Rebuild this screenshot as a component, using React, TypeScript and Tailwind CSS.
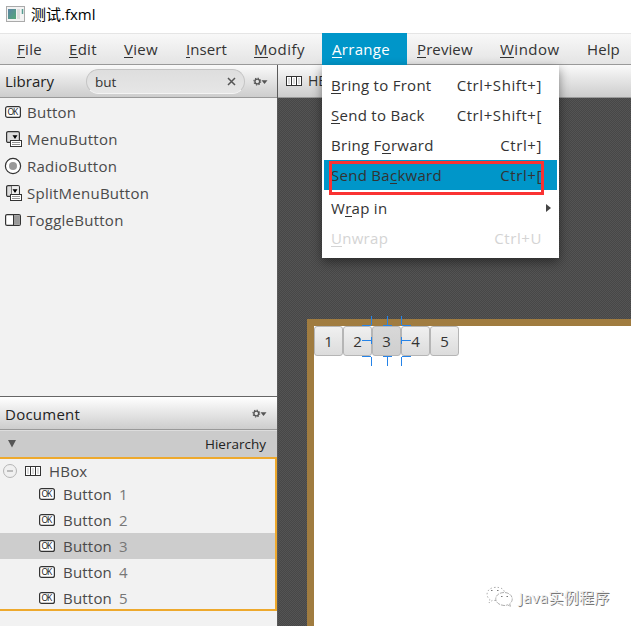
import clsx from "clsx";

const menus = [
  { before: "", key: "F", after: "ile", width: "w-[52px]", spacing: "tracking-[.3px]" },
  { before: "", key: "E", after: "dit", width: "w-[55px]", spacing: "tracking-[.3px]" },
  { before: "", key: "V", after: "iew", width: "w-[62px]", spacing: "tracking-[.3px]" },
  { before: "", key: "I", after: "nsert", width: "w-[68px]", spacing: "tracking-[.1px]" },
  { before: "", key: "M", after: "odify", width: "w-[78px]", spacing: "tracking-[.5px]" },
  { before: "", key: "A", after: "rrange", width: "w-[85px]", spacing: "tracking-[.3px]", active: true },
  { before: "", key: "P", after: "review", width: "w-[83px]", spacing: "tracking-[.1px]" },
  { before: "", key: "W", after: "indow", width: "w-[88px]", spacing: "tracking-[.5px]" },
  { before: "Help", key: "", after: "", width: "w-[53px]", spacing: "tracking-[.1px]" },
];

const arrangeItems = [
  { before: "", key: "B", after: "ring to Front", shortcut: "Ctrl+Shift+]" },
  { before: "", key: "S", after: "end to Back", shortcut: "Ctrl+Shift+[" },
  { before: "Bring F", key: "o", after: "rward", shortcut: "Ctrl+]" },
  { before: "Send Ba", key: "c", after: "kward", shortcut: "Ctrl+[", selected: true },
  { before: "W", key: "r", after: "ap in", submenu: true },
  { before: "", key: "U", after: "nwrap", shortcut: "Ctrl+U", disabled: true },
];

function Mnemonic({ before, char, after }: { before: string; char: string; after: string }) {
  return (
    <span className="whitespace-pre">
      {before}
      <span className="relative">
        {char}
        {char && <span className="absolute inset-x-0 bottom-[1px] h-px bg-current" />}
      </span>
      {after}
    </span>
  );
}

function OkIcon() {
  return (
    <svg width="16" height="12" viewBox="0 0 16 12" className="shrink-0">
      <rect x=".6" y=".6" width="14.8" height="10.8" rx="2" fill="#fff" stroke="#333" strokeWidth="1.2" />
      <text x="8" y="9" textAnchor="middle" fontSize="8.500" textLength="11" fontFamily="Open Sans, sans-serif" fill="#111">OK</text>
    </svg>
  );
}

function MenuButtonIcon({ split = false }: { split?: boolean }) {
  return (
    <svg width="18" height="18" viewBox="0 0 18 18" className="shrink-0">
      <rect x="1.6" y="1.6" width="12.8" height="10.8" rx="1.5" fill="#ddd" stroke="#333" strokeWidth="1.2" />
      {split && <path d="M6.5 2v10" stroke="#777" />}
      {split && <rect x="7" y="2.2" width="6.8" height="8" fill="#eee" />}
      <path d="M7.5 5.2h5L10 9z" fill="#000" />
      <rect x="5.5" y="10.5" width="11" height="6" fill="#fff" stroke="#333" />
      <path d="M7 12.5h8M7 14.5h8" stroke="#777" strokeWidth=".8" />
    </svg>
  );
}

function RadioIcon() {
  return (
    <svg width="18" height="18" viewBox="0 0 18 18" className="shrink-0">
      <circle cx="9" cy="9" r="7.6" fill="#fff" stroke="#333" strokeWidth="1.2" />
      <circle cx="9" cy="9" r="4" fill="#999" />
    </svg>
  );
}

function ToggleIcon() {
  return (
    <svg width="16" height="12" viewBox="0 0 16 12" className="shrink-0">
      <rect x=".6" y=".6" width="14.8" height="10.8" rx="1.5" fill="#fff" stroke="#333" strokeWidth="1.2" />
      <path d="M8.5 1.2h5.6q.8 0 .8.8v8q0 .8-.8.8H8.5z" fill="#999" />
      <path d="M8.5 1v10" stroke="#333" />
    </svg>
  );
}

function HBoxIcon() {
  return (
    <svg width="16" height="10" viewBox="0 0 16 10" className="shrink-0">
      <rect x=".5" y=".5" width="15" height="9" fill="#fff" stroke="#333" />
      <path d="M5.5 0v10M10.5 0v10" stroke="#333" />
      <path d="M2 2h2v6H2zM7 2h2v6H7zM12 2h2v6h-2z" fill="#ddd" />
    </svg>
  );
}

function GearMenu() {
  return (
    <svg width="15" height="9" viewBox="0 0 15 9" className="shrink-0">
      <circle cx="4.3" cy="4.5" r="2.4" fill="none" stroke="#555" strokeWidth="1.4" />
      <circle cx="4.3" cy="4.5" r="3.4" fill="none" stroke="#555" strokeWidth="1.1" strokeDasharray="1.2 1.47" />
      <path d="M8.5 3.2h6L11.5 7z" fill="#555" />
    </svg>
  );
}

function WeChatIcon() {
  return (
    <svg width="28" height="22" viewBox="0 0 28 22" fill="none" stroke="#999" strokeWidth=".8" className="shrink-0">
      <path d="M10 14.5q-2.500-.2-4 0L3 17l.8-3.500C-1 10 .5 2.500 8 1.500s10.500 2.500 10.500 5" strokeDasharray="1.5 2" />
      <path d="M18 6.500c-11 .5-11 12 0 13 1.500 0 2.500-.2 3.500-.7l3 1.700-.8-2.700C29 13.500 25.500 6.500 18 6.500z" strokeDasharray="4 1" />
      <path d="M5 4.500h1.500M11 4.500h1.500M15 10.500h1.500M20.500 10.500H22" stroke="#777" strokeWidth="1.2" />
    </svg>
  );
}

const library = [
  { name: "Button", icon: <OkIcon />, pad: "pl-[5px] gap-[6px]" },
  { name: "MenuButton", icon: <MenuButtonIcon />, pad: "pl-[5px] gap-[4px]" },
  { name: "RadioButton", icon: <RadioIcon />, pad: "pl-[4px] gap-[5px]" },
  { name: "SplitMenuButton", icon: <MenuButtonIcon split />, pad: "pl-[5px] gap-[4px]" },
  { name: "ToggleButton", icon: <ToggleIcon />, pad: "pl-[5px] gap-[6px]" },
];

function ArrangeMenu() {
  return (
    <div className="absolute left-[322px] top-[65px] z-10 w-[237px] bg-white py-[5px] text-[15px] tracking-[.28px] text-[#333] shadow-[0_4px_10px_rgba(0,0,0,0.45)]">
      {arrangeItems.map((item) => (
        <div key={item.after} className={clsx(item.submenu && "border-t-[3px] border-transparent")}>
          <div
            className={clsx(
              "mx-[2px] flex h-[30px] items-center justify-between pl-[7px] pr-[15px]",
              item.selected && "bg-[#0096c9]",
              item.disabled && "text-[#d4d4d4]"
            )}
          >
            <Mnemonic before={item.before} char={item.key} after={item.after} />
            {item.shortcut && <span className="tracking-[.58px]">{item.shortcut}</span>}
            {item.submenu && (
              <svg width="5" height="8" viewBox="0 0 5 8" className="-mr-[9px]">
                <path d="M0 0l5 4-5 4z" fill="#444" />
              </svg>
            )}
          </div>
        </div>
      ))}
      <div className="absolute left-[7px] top-[96px] h-[34px] w-[215px] border-[3px] border-[#fa3232]" />
    </div>
  );
}

function Sidebar() {
  return (
    <aside className="flex w-[278px] shrink-0 flex-col border-r border-[#5a5a5a] bg-[#f2f2f2]">
      <div className="flex h-[33px] shrink-0 items-center border-b border-[#999] bg-linear-to-b from-[#fafafa] to-[#cdcdcd] pl-[5px]">
        <span className="w-[81px] text-[15px] text-[#222]">Library</span>
        <div className="flex h-[25px] w-[159px] items-center justify-between rounded-full border border-[#c4c4c4] border-b-[#f4f4f4] bg-linear-to-b from-[#dedede] to-[#e6e6e6] pl-[8px] pr-[8px]">
          <span className="relative top-px text-[13.500px] text-[#333]">but</span>
          <svg width="9" height="9" viewBox="0 0 9 9">
            <path d="M1 1l7 7M8 1L1 8" stroke="#555" strokeWidth="1.5" />
          </svg>
        </div>
        <span className="ml-[8px]"><GearMenu /></span>
      </div>
      <ul className="h-[298px] shrink-0 text-[15px] tracking-[.25px] text-[#4a4a4a]">
        {library.map((entry) => (
          <li key={entry.name} className={clsx("flex h-[27px] items-center", entry.pad)}>
            {entry.icon}
            <span>{entry.name}</span>
          </li>
        ))}
      </ul>
      <div className="flex h-[34px] shrink-0 items-center justify-between border-y border-t-[#666] border-b-[#999] bg-linear-to-b from-white to-[#cdcdcd] pl-[5px] pr-[10px]">
        <span className="relative top-px text-[15px] tracking-[.25px] text-[#222]">Document</span>
        <GearMenu />
      </div>
      <div className="flex h-[27px] shrink-0 items-center justify-between border-t border-[#ddd] bg-[#cbcbcb] pl-[8px] pr-[11px]">
        <svg width="8" height="8" viewBox="0 0 8 8">
          <path d="M0 0h8L4 7.500z" fill="#555" />
        </svg>
        <span className="text-[13.500px] text-[#222]">Hierarchy</span>
      </div>
      <div className="h-[154px] shrink-0 border-y-2 border-r-2 border-[#eea92d] text-[15px] tracking-[.2px] text-[#4a4a4a]">
        <div className="flex h-[22px] items-center pl-[2px] pt-px">
          <svg width="16" height="16" viewBox="0 0 16 16">
            <circle cx="8" cy="8" r="6.500" fill="#f0f0f0" stroke="#b5b5b5" />
            <path d="M5 8h6" stroke="#888" />
          </svg>
          <span className="ml-[7px]"><HBoxIcon /></span>
          <span className="ml-[8px]">HBox</span>
        </div>
        {[1, 2, 3, 4, 5].map((n) => (
          <div key={n} className={clsx("flex h-[26px] items-center pl-[39px]", n === 3 && "bg-[#cdcdcd]")}>
            <OkIcon />
            <span className="ml-[8px] w-[56px]">Button</span>
            <span className="text-[#777]">{n}</span>
          </div>
        ))}
      </div>
    </aside>
  );
}

function Canvas() {
  return (
    <main className="flex min-w-0 flex-1 flex-col">
      <div className="flex h-[33px] shrink-0 items-center border-b border-[#999] bg-linear-to-b from-[#fafafa] to-[#cdcdcd] pl-[8px]">
        <HBoxIcon />
        <span className="ml-[6px] w-[14px] overflow-hidden text-[14px] text-[#333]">HB</span>
      </div>
      <div className="flex-1 bg-[#4d4d4d] bg-[repeating-conic-gradient(#474747_0_25%,#545454_0_50%)] bg-size-[2px_2px] pl-[29px] pt-[221px]">
        <div className="h-full border-l-[7px] border-t-[7px] border-[#a07c40] bg-white">
          <div className="relative flex w-[145px]">
            {[1, 2, 3, 4, 5].map((n) => (
              <div
                key={n}
                className={clsx(
                  "flex h-[30px] w-[29px] items-center justify-center rounded-[3px] border border-[#b5b5b5] bg-linear-to-b text-[15px] text-[#333]",
                  n === 3 ? "from-[#d8d8d8] to-[#cfcfcf]" : "from-[#f0f0f0] to-[#dcdcdc]"
                )}
              >
                {n}
              </div>
            ))}
            {/* selection guides */}
            <svg width="50" height="52" viewBox="0 0 50 52" className="absolute -top-[10px] left-[47px]">
              <path
                d="M10.500 0v9M26.500 0v9M40.500 0v9M1 9.500h9M22 9.500h9M41 9.500h9M1 24.500h9M41 24.500h9M10.500 21v7M40.500 21v7M1 40.500h9M22 40.500h9M41 40.500h9M10.500 41v9M26.500 41v9M40.500 41v9"
                stroke="#2583e8"
                fill="none"
              />
            </svg>
          </div>
        </div>
      </div>
    </main>
  );
}

export default function App() {
  return (
    <div className="relative flex h-[626px] w-[631px] flex-col overflow-hidden bg-white font-['Open_Sans','Noto_Sans_CJK_SC',sans-serif] leading-[20px]">
      <header className="flex h-[33px] shrink-0 items-center bg-white pb-[5px] pl-[6px]">
        <svg width="19" height="16" viewBox="0 0 19 16">
          <defs>
            <linearGradient id="appIcon" x2="1" y2="1">
              <stop stopColor="#5b83a6" />
              <stop offset="1" stopColor="#55a878" />
            </linearGradient>
          </defs>
          <rect x=".5" y=".5" width="18" height="15" fill="#f3f3f3" stroke="#aaa" />
          <rect x="2" y="3" width="8" height="10" fill="url(#appIcon)" />
          <path d="M11 3h3v10h-3z" fill="#ddd" />
          <path d="M16.500 3v5" stroke="#579c92" strokeWidth="1.5" />
        </svg>
        <span className="ml-[6px] text-[15px] text-black">测试.fxml</span>
      </header>
      <nav className="flex h-[32px] shrink-0 border-b border-t border-b-[#999] border-t-[#e5e5e5] bg-linear-to-b from-[#f8f8f8] to-[#e4e4e4] pl-[7px] text-[15px] text-[#333]">
        {menus.map((menu) => (
          <div
            key={menu.key + menu.after}
            className={clsx("-my-px flex shrink-0 items-center pl-[10px]", menu.width, menu.spacing, menu.active && "bg-[#0096c9] text-white", !menu.key && "-ml-px")}
          >
            <Mnemonic before={menu.before} char={menu.key} after={menu.after} />
          </div>
        ))}
      </nav>
      <div className="flex min-h-0 flex-1">
        <Sidebar />
        <Canvas />
      </div>
      <ArrangeMenu />
      <div className="absolute left-[486px] top-[586px] flex items-center gap-[5px]">
        <WeChatIcon />
        <span className="text-[15px] tracking-[.3px] text-[#eee] [text-shadow:1px_1px_0_#777]">Java实例程序</span>
      </div>
    </div>
  );
}
